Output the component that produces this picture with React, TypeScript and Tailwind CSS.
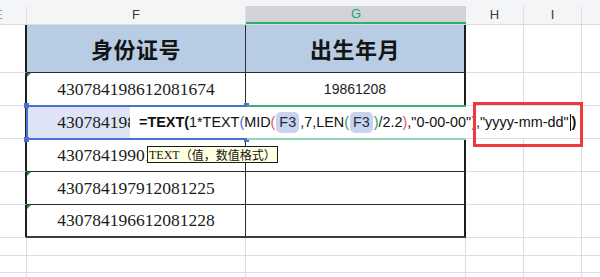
const GRID = "border-[#dadde9]";

const ids = [
  "430784198612081674",
  "430784198612081674",
  "430784199012081234",
  "430784197912081225",
  "430784196612081228",
];

const Tick = () => (
  <span className="absolute left-0 top-0 h-0 w-0 border-t-[4px] border-r-[4px] border-t-[#2f8a2f] border-r-transparent" />
);

const RightCols = ({ h }: { h: string }) => (
  <>
    <div className={`${h} w-[58px] border-r border-b ${GRID}`} />
    <div className={`${h} w-[58px] border-r border-b ${GRID}`} />
    <div className={`${h} flex-1 border-b ${GRID}`} />
  </>
);

const DataRow = ({
  id,
  g,
  tick,
  last,
  selected,
}: {
  id: string;
  g?: string;
  tick?: boolean;
  last?: boolean;
  selected?: boolean;
}) => {
  const bottom = last ? "border-b-2 border-b-[#3c3c3c]" : "border-b border-b-[#2e2e2e]";
  return (
    <div className="flex">
      <div className="h-[33px] w-[27px] border-r-2 border-b border-r-[#1e1e1e] border-b-[#dadde9]" />
      <div
        className={`relative flex h-[33px] w-[219px] items-center justify-center overflow-hidden border-r border-r-[#2e2e2e] ${bottom} ${
          selected ? "bg-[#dee4f5]" : "bg-white"
        }`}
      >
        {tick && <Tick />}
        <span className="font-['Liberation_Serif','Times_New_Roman',serif] text-[17.5px] text-[#1c1c1c]">
          {id}
        </span>
      </div>
      <div
        className={`flex h-[33px] w-[220px] items-center justify-center border-r-2 border-r-[#1e1e1e] ${bottom} text-[14px] text-[#1c1c1c]`}
      >
        {g}
      </div>
      <RightCols h="h-[33px]" />
    </div>
  );
};

const BlankRow = ({ h }: { h: string }) => (
  <div className="flex">
    <div className={`${h} w-[27px] border-r border-b ${GRID}`} />
    <div className={`${h} w-[219px] border-r border-b ${GRID}`} />
    <div className={`${h} w-[220px] border-r border-b ${GRID}`} />
    <RightCols h={h} />
  </div>
);

const Ref = () => (
  <span className="mx-[1px] rounded-[5px] bg-[#c9d3ee] px-[3px] text-[#1f2a44]">F3</span>
);

export default function App() {
  return (
    <div className="relative h-[277px] w-[600px] overflow-hidden bg-white font-['Liberation_Sans',Arial,sans-serif]">
      {/* column headers */}
      <div className="h-[6px] bg-[#f4f5f7]" />
      <div className="flex h-[19px] border-b border-[#d9dce3] bg-[#f4f5f7] text-[13px] text-[#3a3a3a]">
        <div className="flex w-[27px] items-center border-r border-[#dfe1e6] text-[#999]">
          <span className="-ml-[6px]">E</span>
        </div>
        <div className="flex w-[219px] items-center justify-center border-r border-[#dfe1e6]">F</div>
        <div className="flex w-[220px] items-center justify-center border-b-2 border-[#2fae6a] bg-[#d1d3d8] text-[#21a366]">
          G
        </div>
        <div className="flex w-[58px] items-center justify-center border-r border-[#dfe1e6]">H</div>
        <div className="flex w-[58px] items-center justify-center border-r border-[#dfe1e6]">I</div>
        <div className="flex-1" />
      </div>

      {/* table header */}
      <div className="flex">
        <div className="h-[48px] w-[27px] border-r-2 border-b border-r-[#1e1e1e] border-b-[#dadde9]" />
        <div className="flex h-[48px] w-[219px] items-center justify-center border-r border-b border-[#2e2e2e] bg-[#b8cce4] font-['Noto_Sans_CJK_SC',sans-serif] text-[22px] font-semibold tracking-[0.5px] text-[#141414]">
          身份证号
        </div>
        <div className="flex h-[48px] w-[220px] items-center justify-center border-r-2 border-b border-r-[#1e1e1e] border-b-[#2e2e2e] bg-[#b8cce4] font-['Noto_Sans_CJK_SC',sans-serif] text-[22px] font-semibold tracking-[0.5px] text-[#141414]">
          出生年月
        </div>
        <RightCols h="h-[48px]" />
      </div>

      <DataRow id={ids[0]} g="19861208" tick />
      <DataRow id={ids[1]} selected />
      <DataRow id={ids[2]} />
      <DataRow id={ids[3]} tick />
      <DataRow id={ids[4]} tick last />

      <BlankRow h="h-[18px]" />
      <BlankRow h="h-[17px]" />
      <BlankRow h="h-[17px]" />

      {/* active selection on F3 */}
      <div className="absolute left-[26px] top-[105px] h-[35px] w-[221px] border-2 border-[#4b70d2]" />
      <span className="absolute left-[24px] top-[103px] h-[5px] w-[5px] bg-[#4b70d2]" />
      <span className="absolute left-[24px] top-[137px] h-[5px] w-[5px] bg-[#4b70d2]" />
      <span className="absolute left-[244px] top-[103px] h-[5px] w-[5px] bg-[#4b70d2]" />
      <span className="absolute left-[244px] top-[137px] h-[5px] w-[5px] bg-[#4b70d2]" />
      <div className="absolute left-[247px] top-[105px] h-[2px] w-[219px] bg-[#3fb071]" />
      <div className="absolute left-[247px] top-[138px] h-[2px] w-[219px] bg-[#8fd8b2]" />

      {/* in-cell formula editor */}
      <div className="absolute left-[130px] top-[107px] flex h-[31px] w-[452px] items-center bg-white pl-[9px] text-[14.4px] whitespace-nowrap text-[#111]">
        <span className="font-bold">=TEXT(</span>
        <span>1*TEXT</span>
        <span className="text-[#3d6fe0]">(</span>
        <span>MID</span>
        <span className="text-[#e0556a]">(</span>
        <Ref />
        <span>,7,LEN</span>
        <span className="text-[#2f9e55]">(</span>
        <Ref />
        <span className="text-[#2f9e55]">)</span>
        <span>/2.2</span>
        <span className="text-[#e0556a]">)</span>
        <span>,"0-00-00"</span>
        <span className="text-[#3d6fe0]">)</span>
        <span>,"yyyy-mm-dd"</span>
        <span className="mx-[1px] inline-block h-[17px] w-px bg-[#111]" />
        <span className="font-bold">)</span>
      </div>

      {/* function hint */}
      <div className="absolute left-[147px] top-[146px] flex h-[17px] items-center border border-[#1a1a1a] bg-[#ffffe1] px-[1px] text-[12px] leading-none text-[#111]">
        <span className="font-['Liberation_Serif',serif] text-[12px]">TEXT</span>
        <span className="font-['Noto_Sans_CJK_SC',sans-serif]">（值，数值格式）</span>
      </div>

      {/* red highlight box */}
      <div className="absolute left-[473px] top-[102px] h-[45px] w-[110px] border-[3px] border-[#ef3a3c]" />
    </div>
  );
}
